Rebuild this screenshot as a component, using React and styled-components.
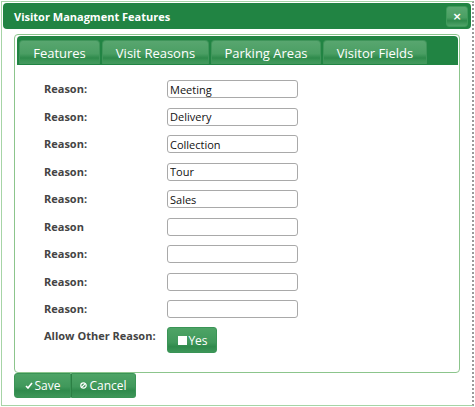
import React from "react";
import styled, { createGlobalStyle } from "styled-components";

const Global = createGlobalStyle`
  html, body { margin: 0; padding: 0; background: #fff; }
  body { font-family: "Open Sans", "Liberation Sans", sans-serif; }
  * { box-sizing: border-box; }
`;

const Dialog = styled.div`
  margin: 1px 0 0 1px;
  width: 473px;
  height: 405px;
  border: 1px solid #a6d4a6;
  border-right: 2px dotted #9a9a9a;
  padding: 1px;
  display: flex;
  flex-direction: column;
`;

const Header = styled.div`
  height: 26px;
  border-radius: 4px;
  background: #218443;
  display: flex;
  align-items: center;
  justify-content: space-between;
  padding: 0 3px 0 11px;
`;

const Title = styled.span`
  color: #fff;
  font-weight: 700;
  font-size: 11px;
`;

const CloseBtn = styled.button`
  width: 22px;
  height: 21px;
  border: 1px solid #3e9a5a;
  border-radius: 3px;
  background: linear-gradient(#5aa871 0%, #4a9f63 55%, #2f8a4c 72%, #4fa268 100%);
  color: #fff;
  font-size: 11px;
  font-weight: 700;
  padding: 0;
  display: flex;
  align-items: center;
  justify-content: center;
  font-family: "DejaVu Sans", sans-serif;
`;

const Body = styled.div`
  padding: 5px 0 0 11px;
  display: flex;
  flex-direction: column;
`;

const Panel = styled.div`
  width: 446px;
  height: 339px;
  border: 1px solid #8cc58c;
  border-radius: 4px;
  padding: 1px 1px 0 2px;
`;

const TabBar = styled.div`
  height: 29px;
  background: #218443;
  border-radius: 4px 4px 0 0;
  display: flex;
  align-items: flex-end;
  gap: 2px;
  padding: 0 0 1px 2px;
`;

const Tab = styled.div`
  height: 24px;
  width: ${(p) => p.$w}px;
  flex: none;
  border: 1px solid #3f955a;
  border-bottom: none;
  border-radius: 4px 4px 0 0;
  background: linear-gradient(#58a66f 0%, #4a9e63 55%, #2e8a4b 74%, #3c9657 86%, #45995f 100%);
  color: #fff;
  font-size: 13px;
  display: flex;
  align-items: center;
  justify-content: center;
  white-space: nowrap;
`;

const Form = styled.div`
  display: grid;
  grid-template-columns: 123px 131px;
  grid-auto-rows: 18px;
  row-gap: 9.5px;
  padding: 15px 0 0 27px;
`;

const Label = styled.div`
  font-size: 11px;
  font-weight: 700;
  color: #444;
  display: flex;
  align-items: center;
  padding-bottom: 1px;
`;

const Input = styled.input`
  width: 131px;
  height: 18px;
  border: 1px solid #a9a9a9;
  border-radius: 3px;
  font-family: "Open Sans", "Liberation Sans", sans-serif;
  font-size: 11px;
  color: #111;
  padding: 0 2px;
  outline: none;
  background: #fff;
`;

const AllowRow = styled.div`
  display: grid;
  grid-template-columns: 123px auto;
  padding: 9px 0 0 27px;
`;

const AllowLabel = styled(Label)`
  align-items: flex-start;
  padding-top: 1px;
`;

const YesBtn = styled.button`
  width: 50px;
  height: 26px;
  border: 1px solid #3a9456;
  border-radius: 3px;
  background: linear-gradient(#4ea466 0%, #40985b 60%, #2f8a4c 78%, #3d9658 100%);
  color: #fff;
  font-family: "Open Sans", "Liberation Sans", sans-serif;
  font-size: 12px;
  display: flex;
  align-items: center;
  justify-content: center;
  padding: 0 0 0 2px;
`;

const Check = styled.span`
  width: 9px;
  height: 9px;
  background: #fff;
  display: inline-block;
  margin-right: 1px;
`;

const Footer = styled.div`
  display: flex;
`;

const FootBtn = styled.button`
  height: 25px;
  width: ${(p) => p.$w}px;
  border: 1px solid #3a9456;
  border-radius: ${(p) => (p.$first ? "3px 0 0 3px" : "0 3px 3px 0")};
  border-left: ${(p) => (p.$first ? "1px solid #3a9456" : "1px solid #2b7f44")};
  background: linear-gradient(#4ea466 0%, #40985b 55%, #2f8a4c 72%, #3d9658 100%);
  color: #fff;
  font-family: "Open Sans", "Liberation Sans", sans-serif;
  font-size: 12px;
  display: flex;
  align-items: center;
  justify-content: center;
  gap: 2px;
  padding: 0;
`;

const reasons = [
  ["Reason:", "Meeting"],
  ["Reason:", "Delivery"],
  ["Reason:", "Collection"],
  ["Reason:", "Tour"],
  ["Reason:", "Sales"],
  ["Reason", ""],
  ["Reason:", ""],
  ["Reason:", ""],
  ["Reason:", ""],
];

const tabs = [
  ["Features", 81],
  ["Visit Reasons", 107],
  ["Parking Areas", 110],
  ["Visitor Fields", 104],
];

export default function App() {
  return (
    <>
      <Global />
      <Dialog>
        <Header>
          <Title>Visitor Managment Features</Title>
          <CloseBtn>×</CloseBtn>
        </Header>
        <Body>
          <Panel>
            <TabBar>
              {tabs.map(([t, w]) => (
                <Tab key={t} $w={w}>{t}</Tab>
              ))}
            </TabBar>
            <Form>
              {reasons.map(([l, v], i) => (
                <React.Fragment key={i}>
                  <Label>{l}</Label>
                  <Input defaultValue={v} />
                </React.Fragment>
              ))}
            </Form>
            <AllowRow>
              <AllowLabel>Allow Other Reason:</AllowLabel>
              <YesBtn>
                <Check />
                Yes
              </YesBtn>
            </AllowRow>
          </Panel>
          <Footer>
            <FootBtn $first $w={57}>
              <svg width="8" height="7" viewBox="0 0 8 7">
                <path d="M1 4 L3 6 L7 1" stroke="#fff" strokeWidth="1.6" fill="none" />
              </svg>
              Save
            </FootBtn>
            <FootBtn $w={65}>
              <svg width="7" height="7" viewBox="0 0 7 7">
                <circle cx="3.5" cy="3.5" r="2.7" stroke="#fff" strokeWidth="1.2" fill="none" />
                <path d="M1.6 5.4 L5.4 1.6" stroke="#fff" strokeWidth="1.2" />
              </svg>
              Cancel
            </FootBtn>
          </Footer>
        </Body>
      </Dialog>
    </>
  );
}
